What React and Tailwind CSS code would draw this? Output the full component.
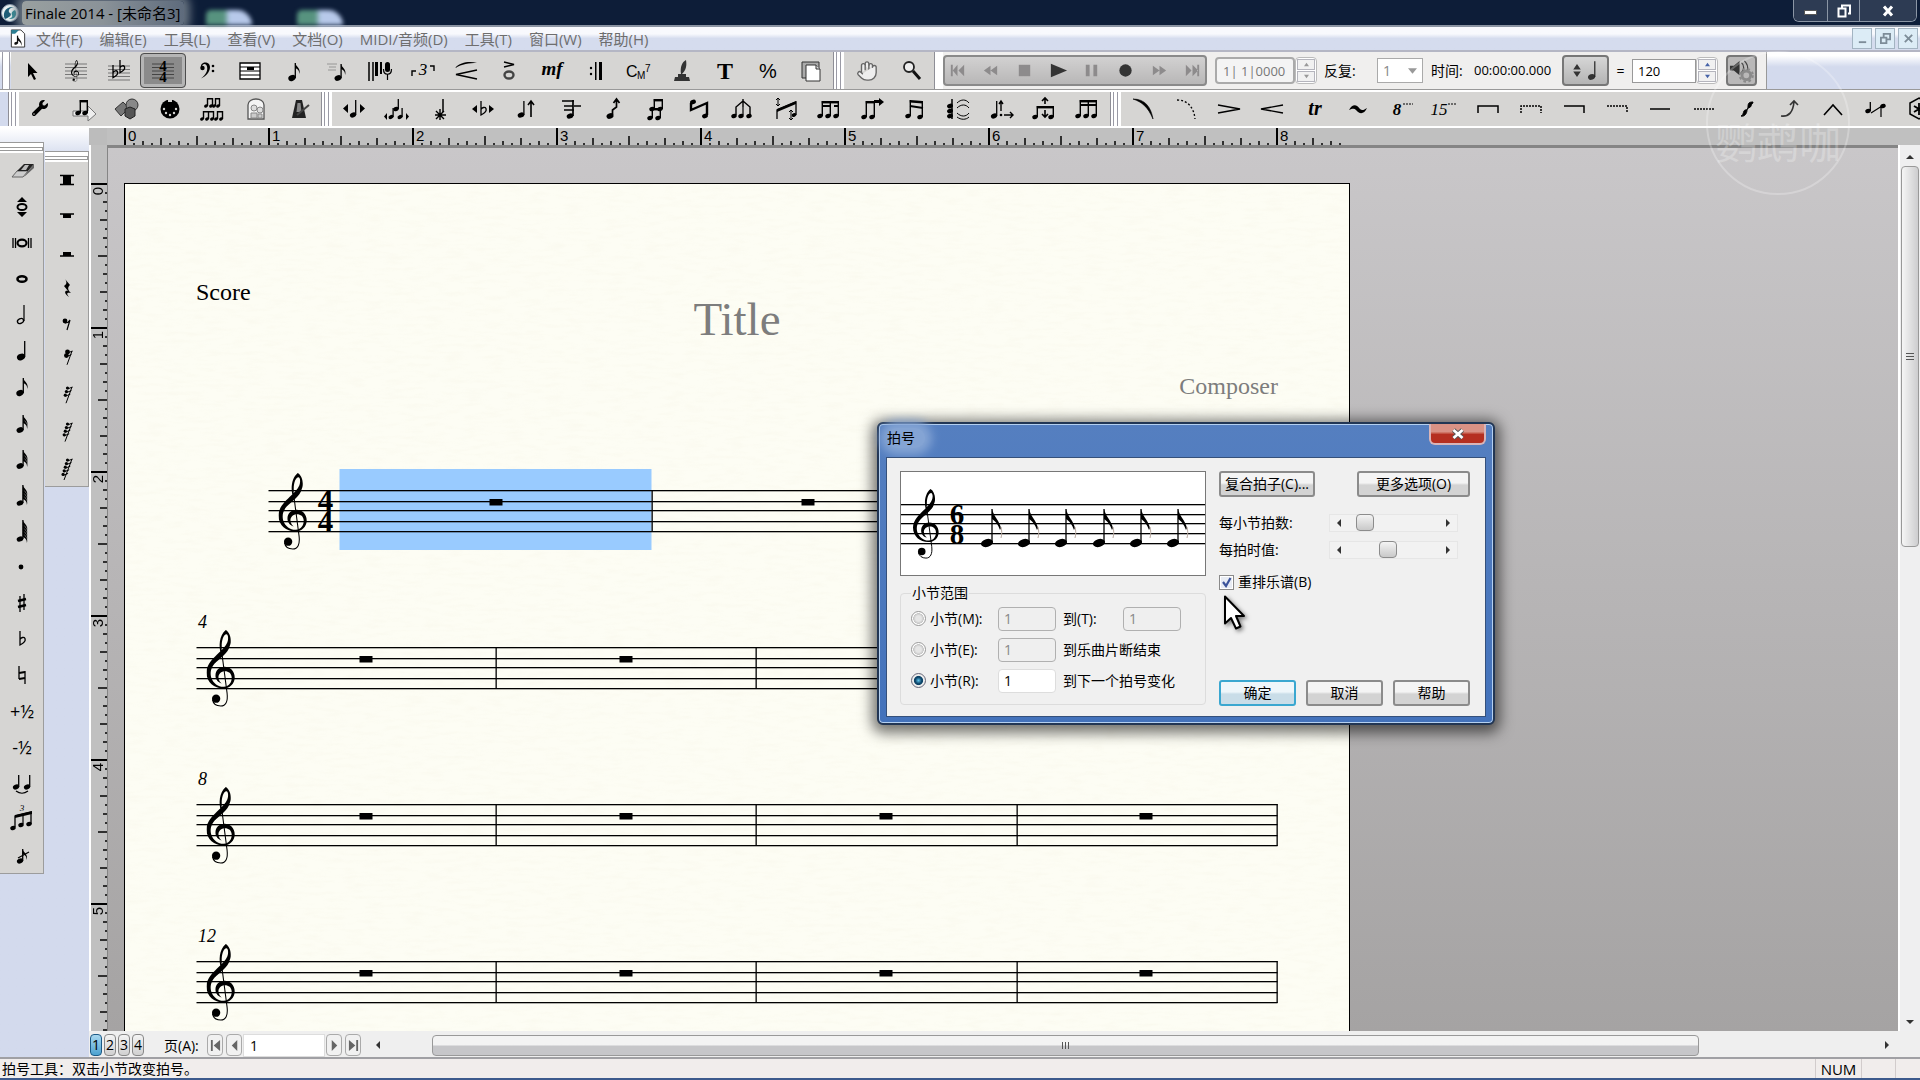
import React from "react";
import { FaWrench } from "react-icons/fa";
import { Hand } from "lucide-react";

/* ---------- music drawing helpers ---------- */

const Head = ({ x, y, r = 3 }) => (
  <ellipse cx={x} cy={y} rx={r} ry={r * 0.75} transform={`rotate(-22 ${x} ${y})`} />
);

const Note = ({ x, y, h = 12, r = 3, flags = 0 }) => (
  <g>
    <Head x={x} y={y} r={r} />
    <path d={`M${x + r - 0.5} ${y}v${-h}`} stroke="currentColor" strokeWidth="1.3" fill="none" />
    {Array.from({ length: flags }, (_, i) => (
      <path
        key={i}
        d={`M${x + r - 0.5} ${y - h + i * 3}c0 3 6 5 4 11c0-4-2-5-4-6z`}
      />
    ))}
  </g>
);

const ClefShape = () => (
  <g>
    <path d="M92 48C88 70 62 84 46 102C34 116 33 130 36 142C42 162 60 172 74 171C92 170 98 156 98 144C98 130 88 124 78 124C66 124 58 132 58 142C58 151 63 157 68 161C56 158 49 148 49 138C49 122 60 111 76 111C94 111 107 125 107 143C107 162 92 176 72 176C46 176 22 158 22 128C22 102 44 84 60 68C76 52 86 42 87 26C87.5 18 85 13 82 13C74 13 67 30 68 52L66 74C58 50 60 16 80 0C90 6 96 20 95 36C94.6 42 93.5 45 92 48Z" />
    <path d="M67 60L84 190C87 215 80 229 65 229C52 229 42 222 40 210" fill="none" stroke="currentColor" strokeWidth="3.2" />
    <circle cx="51" cy="207" r="12.5" />
  </g>
);

const Clef = ({ x, y, h = 77 }) => (
  <svg x={x} y={y} width={(h * 86) / 232} height={h} viewBox="22 0 86 232">
    <ClefShape />
  </svg>
);

const Staff = ({ x = 3, y = 7, w = 22, gap = 3.5, c = "#777" }) => (
  <path
    d={[0, 1, 2, 3, 4].map((i) => `M${x} ${y + i * gap}h${w}`).join("")}
    stroke={c}
    strokeWidth="1"
    fill="none"
  />
);

const Beam = ({ xs, y = 21, top = 6, r = 2.8, thick = 2.4, slope = 0 }) => (
  <g>
    {xs.map((x, i) => (
      <g key={x}>
        <Head x={x} y={y + (slope * i) / (xs.length - 1 || 1)} r={r} />
        <path d={`M${x + r - 0.5} ${y + (slope * i) / (xs.length - 1 || 1)}V${top + (slope * i) / (xs.length - 1 || 1)}`} stroke="currentColor" strokeWidth="1.4" />
      </g>
    ))}
    <path d={`M${xs[0] + r - 1} ${top}L${xs[xs.length - 1] + r} ${top + slope}v${thick}L${xs[0] + r - 1} ${top + thick}z`} />
  </g>
);

const L = ({ d, w = 1.2, c = "currentColor", dash }) => (
  <path d={d} fill="none" stroke={c} strokeWidth={w} strokeDasharray={dash} />
);

const Serif = ({ x = 14, y, s, children, italic, weight = 700 }) => (
  <text
    x={x}
    y={y}
    textAnchor="middle"
    className={italic ? "font-['Liberation_Serif',serif] italic" : "font-['Liberation_Serif',serif]"}
    fontSize={s}
    fontWeight={weight}
  >
    {children}
  </text>
);

const Flat = ({ x, y, s = 1 }) => (
  <path d={`M${x} ${y}v${14 * s}c${3 * s}${-1.5 * s} ${6 * s}${-4 * s} ${5 * s}${-6.5 * s}c${-1 * s}${-2 * s} ${-4 * s}${-1 * s} ${-5 * s} 1`} fill="none" stroke="currentColor" strokeWidth="1.3" />
);

/* ---------- toolbar icon sets: [label, drawing] ---------- */

const mainTools = [
  ["选择", <path d="M9 6v14l3-3 3 6 2-1-3-6h4.5z" />],
  ["谱表", <><Staff /><Clef x={9} y={3} h={22} /></>],
  ["调号", <><Staff y={9} /><Flat x={8} y={8} s={0.9} /><Flat x={15} y={3} s={0.9} /></>],
  ["拍号", <><Staff y={7} c="#444" /><Serif y={14} s={15}>4</Serif><Serif y={25} s={15}>4</Serif></>],
  ["谱号", <><path d="M8 12c-1-5 2-7 5-6.5c6 .5 6 11-5 16c5-4 7-8 6-12c-.6-3-4-3.5-5 0z" /><circle cx="9.5" cy="11" r="2.2" /><circle cx="20" cy="9" r="1.3" /><circle cx="20" cy="14" r="1.3" /></>],
  ["小节", <><path d="M4 6h20v16H4z" fill="#fff" stroke="currentColor" strokeWidth="1.3" /><L d="M4 10h20M4 14h20M4 18h20" /><path d="M11 10h7v3h-7z" /></>],
  ["简易输入", <Note x={12} y={21} h={15} r={3.8} flags={1} />],
  ["快速输入", <><Note x={15} y={21} h={14} r={3.6} flags={1} /><L d="M4 7h10M6 10h7M5 13h8" w={0.8} c="#888" /></>],
  ["HyperScribe", <><L d="M3 5v19M7 5v19" w={1.5} /><path d="M9 5h3v14H9zM14 5h2v12h-2z" /><rect x="19" y="5" width="5" height="10" rx="2.5" /><L d="M17.5 12c0 7 8 7 8 0M21.5 17v6" /></>],
  ["连音", <><L d="M3 19v-5h4M25 14v-5h-4" w={1.4} /><Serif y={18} s={17} italic weight={400}>3</Serif></>],
  ["智能图形", <><path d="M3 11c5-6 15-7 22-5c-8 0-15 1-22 5z" /><L d="M25 13L4 17.5l21 4.500" w={1.4} /></>],
  ["演奏法", <><L d="M9 5l10 2.500-10 2.500" w={1.3} /><ellipse cx="14" cy="18" rx="4.5" ry="3.5" fill="none" stroke="#444" strokeWidth="2.4" /></>],
  ["表情", <Serif y={18} s={19} italic>mf</Serif>],
  ["反复", <><circle cx="9" cy="11" r="1.2" /><circle cx="9" cy="17" r="1.2" /><path d="M13 5h1.5v18H13zM17 5h3v18h-3z" /></>],
  ["和弦", <><text x="1" y="20" fontSize="16" className="font-['Liberation_Sans',sans-serif]">C</text><text x="12" y="22" fontSize="10" className="font-['Liberation_Sans',sans-serif]">M</text><text x="20" y="15" fontSize="10" className="font-['Liberation_Sans',sans-serif]">7</text></>],
  ["歌词", <><path d="M13 17c-1-7 1-12 5-14c1 6 0 10-4 14zM10 17h8v3h-8zM7 20h14l1 4H6z" fill="#333" /></>],
  ["文本", <Serif y={22} s={24}>T</Serif>],
  ["缩放", <text x="14" y="21" textAnchor="middle" fontSize="20" className="font-['Liberation_Sans',sans-serif]">%</text>],
  ["页面布局", <><path d="M5 5h17v16H5z" fill="#aaa" stroke="#333" /><path d="M9 8h10l4 4v12H9z" fill="#fff" stroke="#333" /><path d="M19 8v4h4" fill="#ddd" stroke="#333" /></>],
];

const advancedTools = [
  ["特殊工具", <FaWrench x="5" y="5" width="18" height="18" />],
  ["音符镜像", <><path d="M3 16h15v-5l8 8-8 7v-5H3z" fill="#eee" stroke="#777" /><Beam xs={[8, 15]} y={18} top={5} /></>],
  ["图形", <><path d="M2 14l8-7 6 6-8 8z" fill="#777" stroke="#333" /><circle cx="19" cy="10" r="6" fill="#888" stroke="#333" /><path d="M12 14l5-2 5 2v7l-5 3-5-3z" fill="#555" stroke="#222" /></>],
  ["MIDI", <><circle cx="14" cy="14" r="9.5" /><path d="M12 3h4v4h-4z" fill="#d6d5d3" /><g fill="#d6d5d3"><circle cx="8" cy="14" r="1.2" /><circle cx="20" cy="14" r="1.2" /><circle cx="14" cy="20" r="1.2" /><circle cx="10" cy="18" r="1.2" /><circle cx="18" cy="18" r="1.2" /></g></>],
  ["Ossia", <><Beam xs={[7, 12]} y={11} top={3} r={2} thick={1.5} /><Beam xs={[15, 19]} y={11} top={3} r={2} thick={1.5} /><Beam xs={[3, 8, 13]} y={24} top={16} r={2} thick={1.5} /><Beam xs={[17, 22]} y={24} top={16} r={2} thick={1.5} /></>],
  ["镜像", <><path d="M6 24V10c0-8 16-8 16 0v14z" fill="#f4f4f4" stroke="#555" strokeWidth="1.3" /><circle cx="12" cy="13" r="3" fill="#ddd" stroke="#888" /><circle cx="18" cy="15" r="3" fill="#ddd" stroke="#888" /><path d="M9 18h6v5H9zM16 19h4v4h-4z" fill="#ccc" stroke="#888" /></>],
  ["节拍", <><path d="M11 5h6l4 18H7z" fill="#222" /><path d="M12.5 8h3l1 9h-5z" fill="#888" /><L d="M12 20L24 10" w={2} c="#444" /></>],
];

const noteTools = [
  ["音符移位", <><path d="M8 9v9l-5-4.5zM20 9v9l5-4.5z" /><Note x={13} y={20} h={15} r={3.2} /></>],
  ["音符位置", <><Note x={13} y={14} h={10} r={2.8} /><Note x={8} y={22} h={9} r={2.6} /><Note x={17} y={22} h={9} r={2.6} /><path d="M4 18v7l-3-3.5zM23 18v7l3-3.5z" /></>],
  ["符头", <><L d="M17 4v13" w={1.5} /><L d="M10 16l8 8M18 16l-8 8M14 14v11M9 20h11" w={1.4} /></>],
  ["临时记号", <><path d="M8 10v8l-5-4zM20 10v8l5-4z" /><Flat x={12} y={6} /></>],
  ["符干长度", <><Note x={9} y={20} h={14} r={3.4} /><L d="M19 22V6M16 10l3-4 3 4" w={1.6} /></>],
  ["反向符干", <><L d="M6 6h12M8 11h9M8 15h10M17 5v16M18 11h7" w={1.7} /><Head x={14} y={21} r={3.4} /></>],
  ["自定义符干", <><Head x={11} y={21} r={3.6} /><L d="M13.5 20v-5l4-3V5M14.5 8l3-4 3 4" w={1.7} /></>],
  ["符杠", <><Beam xs={[10, 18]} y={14} top={4} /><Beam xs={[8, 16]} y={23} top={13} /></>],
  ["符杠角度", <><L d="M6 8v7l16-7v12" w={2.4} /><Head x={8} y={7} /><Head x={20} y={21} /></>],
  ["符杠打断", <><L d="M14 4v8M14 6l-7 6v8M14 6l7 6v8" w={1.4} /><Head x={5} y={21} r={2.8} /><Head x={12} y={21} r={2.8} /><Head x={20} y={21} r={2.8} /><L d="M14 12v8" /></>],
  ["符杠延伸", <><L d="M5 24V15L24 7v13" w={1.3} /><path d="M5 14l19-8v3L5 17z" /><L d="M6 3v8M4 5l2-2 2 2M4 9l2 2 2-2M19 15v10M17 17l2-2 2 2M17 23l2 2 2-2" w={1} /><Head x={22} y={20} r={2.4} /></>],
  ["次级符杠", <><Beam xs={[5, 13, 21]} y={21} top={6} /><L d="M7 11h8M19 11h4" w={2} /></>],
  ["符杠箭头", <><Beam xs={[6, 14]} y={22} top={6} /><path d="M16 5h5V3l5 4-5 4V8h-5z" /></>],
  ["符杠厚度", <><Beam xs={[7, 19]} y={21} top={5} slope={1} /><L d="M9 11l13 2" w={1.8} /></>],
  ["连线", <><L d="M7 4v20" w={1.5} /><Head x={5} y={11} /><Head x={5} y={16} /><Head x={5} y={21} /><L d="M12 8c4-4 9-4 12 0M12 13c4-4 9-4 12 0M12 18c4 4 9 4 12 0M12 22c4 3 9 3 12 0" w={1} /></>],
  ["附点", <><Note x={6} y={21} h={15} r={3.2} /><circle cx="13" cy="20" r="1.3" /><L d="M13 16V7M11 9l2-3 2 3M16 20h9M22 17l3 3-3 3" w={1.4} /></>],
  ["符干端", <><Beam xs={[4, 20]} y={22} top={11} /><L d="M14 9V3M11 6l3-3 3 3M14 15v6M11 19l3 3 3-3" w={1.6} /></>],
  ["符杠样式", <><Beam xs={[4, 12, 20]} y={21} top={5} /><L d="M6 10h17" w={2} /></>],
];

const shapeTools = [
  ["连线", <path d="M4 4c12 0 18 8 20 20C19 12 13 7 4 4z" stroke="currentColor" strokeWidth=".6" />],
  ["虚连线", <L d="M5 5c11 0 17 8 18 19" dash="2 2" w={1.3} />],
  ["渐弱", <L d="M3 10l22 4-22 4" w={1.4} />],
  ["渐强", <L d="M25 10L3 14l22 4" w={1.4} />],
  ["颤音", <Serif y={20} s={20} italic>tr</Serif>],
  ["颤音线", <path d="M5 15c4-7 8-5 11-1c2 2 4 1 7-1c-3 7-8 6-11 2c-2-2-4-1-7 0z" />],
  ["高八度", <><Serif x={9} y={20} s={17} italic>8</Serif><L d="M15 9h10" dash="2 1" w={1} /></>],
  ["十五度", <><Serif x={8} y={20} s={17} italic weight={400}>15</Serif><L d="M17 9h9" dash="2 1" w={1} /></>],
  ["方括号", <L d="M4 18v-7h20v7" w={1.5} />],
  ["虚方括号", <L d="M4 18v-7h20v7" w={1.5} dash="2 1" />],
  ["半括号", <L d="M4 11h20v7" w={1.5} />],
  ["虚半括号", <L d="M4 11h20v7" w={1.5} dash="2 1" />],
  ["直线", <L d="M4 14h20" w={1.5} />],
  ["虚线", <L d="M4 14h20" w={1.5} dash="2 1" />],
  ["滑音", <path d="M8 21c2 0 2-3 3-5s4 0 4-4 1-5 5-5c0 2-2 2-2 4s-4 1-4 4-2 7-6 6z" stroke="currentColor" />],
  ["推弦", <L d="M5 21c8 1 12-4 13-14M14 10l4-4 4 4" w={1.6} c="#333" />],
  ["尖角", <L d="M5 20l9-10 9 10" w={1.6} />],
  ["滑线", <><Note x={6} y={16} h={9} r={2.8} /><L d="M9 18l11-7M19 11v11" /><Head x={21} y={11} r={2.8} /></>],
  ["自定义线", <><L d="M14 3l9 5v11l-9 5-9-5V8z" w={1.5} /><L d="M14 8v12M9 11l10 6M19 11l-10 6" w={1.8} /></>],
];

const flaggedRest = (n) => (
  <g>
    {Array.from({ length: n }, (_, i) => (
      <g key={i}>
        <circle cx={14.5 - i * 1.1} cy={6 + i * 3.6} r={n < 3 ? 2.4 : 1.6} />
        <L d={`M${14.5 - i * 1.1} ${7 + i * 3.6}l5-2`} w={1} />
      </g>
    ))}
    <L d={`M19 5l-${3 + n} ${9 + n * 2.4}`} w={1} />
  </g>
);

const noteDurations = [
  ["橡皮擦", <><path d="M4 20l5-6h11l-5 6z" fill="#ccc" stroke="#666" /><path d="M9 14l7-7h10l-6 7z" fill="#222" /><path d="M20 14l6-7v4l-10 9z" fill="#666" /><path d="M13 13l4-5h4l-3 5z" fill="#bbb" /></>],
  ["重定音高", <><path d="M9 9l5-5 5 5zM9 19l5 5 5-5z" /><ellipse cx="14" cy="14" rx="4.5" ry="3" fill="none" stroke="currentColor" strokeWidth="2" /></>],
  ["倍全音符", <><L d="M5 9v10M7.5 9v10M20.5 9v10M23 9v10" w={1.3} /><ellipse cx="14" cy="14" rx="4.5" ry="3.3" fill="none" stroke="currentColor" strokeWidth="2.2" /></>],
  ["全音符", <ellipse cx="14" cy="14" rx="4.5" ry="2.8" fill="none" stroke="currentColor" strokeWidth="2.6" />],
  ["二分音符", <><ellipse cx="12.5" cy="20" rx="3.2" ry="2.3" fill="none" stroke="currentColor" strokeWidth="1.3" transform="rotate(-25 12.5 20)" /><L d="M16 20V4" /></>],
  ["四分音符", <Note x={13} y={20} h={16} r={4.2} />],
  ["八分音符", <Note x={12} y={20} h={15} r={3.8} flags={1} />],
  ["十六分音符", <Note x={12} y={21} h={15} r={3.6} flags={2} />],
  ["三十二分音符", <Note x={12} y={21} h={16} r={3.6} flags={3} />],
  ["六十四分音符", <Note x={12} y={22} h={18} r={3.4} flags={4} />],
  ["一百二十八分音符", <Note x={12} y={22} h={19} r={3.4} flags={5} />],
  ["附点", <circle cx="13" cy="14" r="2.4" />],
  ["升号", <><L d="M12 7v16M16 5v16" w={1.3} /><L d="M10 12l8-2M10 18l8-2" w={2.4} /></>],
  ["降号", <Flat x={12} y={6} />],
  ["还原号", <><L d="M11 5v13M17 10v13" w={1.3} /><L d="M11 12l6-1M11 18l6-1" w={2.2} /></>],
  ["升半音", <text x="14" y="21" textAnchor="middle" fontSize="18" className="font-['Open_Sans',sans-serif]">+½</text>],
  ["降半音", <text x="14" y="21" textAnchor="middle" fontSize="18" className="font-['Open_Sans',sans-serif]">-½</text>],
  ["延音线", <><Note x={8} y={18} h={12} r={3.2} /><Note x={19} y={18} h={12} r={3.2} /><L d="M8 22c4 3 8 3 12 0" /></>],
  ["三连音", <><L d="M7 22V11l16-4v12" w={1.3} /><path d="M7 10l17-4v3L7 13z" /><Head x={5} y={23} r={2.8} /><Head x={13} y={20} r={2.8} /><Head x={21} y={19} r={2.8} /><L d="M15 19V9" /><Serif y={6} s={9} italic weight={400}>3</Serif></>],
  ["倚音", <><Note x={12} y={20} h={12} r={3.2} flags={1} /><L d="M10 17l11-6" /></>],
];

const rests = [
  ["倍全休止", <><L d="M7 9.5h14M7 18.500h14" w={1.4} /><path d="M10 10h8v8h-8z" /></>],
  ["全休止", <><L d="M7 12h14" w={1.5} /><path d="M10 12h8v4h-8z" /></>],
  ["二分休止", <><L d="M7 18h14" w={1.5} /><path d="M10 14h8v4h-8z" /></>],
  ["四分休止", <path d="M12 5l5 6c-3 3-2 5 1 8c-4-1-5 0-2 4c-6-4-4-7-1-6l-4-5c3-2 3-4 1-7z" />],
  ["八分休止", <><circle cx="12" cy="11" r="2.4" /><L d="M12 13c3 0 4-1 5-3l-3 10" w={1.2} /></>],
  ["十六分休止", flaggedRest(2)],
  ["三十二分休止", flaggedRest(3)],
  ["六十四分休止", flaggedRest(4)],
  ["一百二十八分休止", flaggedRest(5)],
];

const Glyph = ({ children }) => (
  <svg viewBox="0 0 28 28" className="size-7 shrink-0 overflow-visible" fill="currentColor" aria-hidden="true">
    {children}
  </svg>
);

const ToolGroup = ({ items, width, selected }) => (
  <div className={`flex h-full shrink-0 bg-[#d6d5d3] ${width}`}>
    {items.map(([label, art], i) => (
      <button
        key={i}
        type="button"
        aria-label={label}
        className={
          i === selected
            ? "my-[1px] flex min-w-0 flex-1 items-center justify-center rounded border border-[#4d4d4d] bg-[#8b8b8b] shadow-[inset_0_0_0_3px_#b5b5b5]"
            : "flex min-w-0 flex-1 items-center justify-center"
        }
      >
        <Glyph>{art}</Glyph>
      </button>
    ))}
  </div>
);

const Grip = () => (
  <div className="flex h-full w-[11px] shrink-0 border-l border-[#8e8e96] bg-white">
    <div className="ml-[2px] w-[5px] border-x border-[#9a9aa5]" />
  </div>
);

/* ---------- top chrome ---------- */

const TitleBar = () => (
  <header className="flex h-[25px] shrink-0 items-center justify-between bg-[#0d1d38] pl-[1px]">
    <div className="flex h-full items-center">
      <svg viewBox="0 0 18 18" className="size-[18px]" aria-hidden="true">
        <circle cx="9" cy="9" r="8.5" fill="#e9f1f2" stroke="#89a" />
        <path d="M13 3C7 4 7 8 9 9s1 4-5 6c-3-5 0-13 9-12z" fill="#1d5d77" />
        <path d="M14 6c-3 1-4 3-3 5s-1 3-3 4c6 1 9-5 6-9z" fill="#2b8a94" />
      </svg>
      <h1 className="ml-[3px] rounded bg-gradient-to-r from-[#99a0a0] via-[#8a9298] to-[#5e6b7c] px-[3px] text-[15px] leading-[24px] text-black shadow-[0_0_8px_6px_#66727f]">
        Finale 2014 - [未命名3]
      </h1>
      <div className="ml-[22px] flex h-full items-end gap-[45px] self-end">
        <div className="h-[15px] w-[46px] rounded-tl-lg rounded-tr-3xl bg-gradient-to-r from-[#57937f] from-40% to-[#b7c9ea] to-50% blur-[2px]" />
        <div className="h-[15px] w-[46px] rounded-tl-lg rounded-tr-3xl bg-gradient-to-r from-[#57937f] from-40% to-[#b7c9ea] to-50% blur-[2px]" />
      </div>
    </div>
    <div className="mr-[3px] flex h-[22px] self-start overflow-hidden rounded-b-md border border-t-0 border-[#8b96a5] text-white">
      <button type="button" aria-label="最小化" className="flex w-[34px] items-center justify-center border-r border-[#8b96a5] bg-[#2d3b53]">
        <span className="mt-[4px] h-[5px] w-[13px] border border-[#555] bg-white" />
      </button>
      <button type="button" aria-label="还原" className="flex w-[32px] items-center justify-center border-r border-[#8b96a5] bg-[#2d3b53]">
        <svg viewBox="0 0 14 14" className="size-[14px]" fill="none" stroke="#fff" strokeWidth="2" aria-hidden="true">
          <path d="M5 4V1.500h8v8h-2M1.500 4.500h7v8h-7z" />
        </svg>
      </button>
      <button type="button" aria-label="关闭" className="flex w-[56px] items-center justify-center bg-[#2d3b53]">
        <svg viewBox="0 0 12 12" className="size-[12px]" stroke="#fff" strokeWidth="3" aria-hidden="true">
          <path d="M2 1.500l8 9M10 1.500l-8 9" />
        </svg>
      </button>
    </div>
  </header>
);

const menus = ["文件(F)", "编辑(E)", "工具(L)", "查看(V)", "文档(O)", "MIDI/音频(D)", "工具(T)", "窗口(W)", "帮助(H)"];

const MenuBar = () => (
  <nav className="flex h-[27px] shrink-0 items-center justify-between border-t-2 border-b-2 border-t-[#8a93a2] border-b-[#b4b6c4] bg-gradient-to-b from-[#f8f9fd] from-30% to-[#d5dcee] to-50% pl-[10px]">
    <div className="flex items-center gap-[17px] text-[15px] leading-[20px] text-[#6e6e6e]">
      <svg viewBox="0 0 16 20" className="-mr-[7px] h-[19px] w-[16px]" aria-hidden="true">
        <path d="M1 1h10l4 4v14H1z" fill="#fff" stroke="#333" />
        <path d="M1 1h8l-4 4H1z" fill="#2b7f93" />
        <g fill="#111" color="#111"><Note x={6} y={15} h={8} r={2} flags={1} /></g>
      </svg>
      {menus.map((m) => (
        <button key={m} type="button" className="whitespace-nowrap">{m}</button>
      ))}
    </div>
    <div className="mr-[2px] flex gap-[3px]">
      {[
        ["最小化子窗口", "M2 10h8"],
        ["还原子窗口", "M4 4V1h7v6H8M1 5h6v6H1z"],
        ["关闭子窗口", "M2 2l8 8M10 2l-8 8"],
      ].map(([label, d]) => (
        <button key={label} type="button" aria-label={label} className="flex h-[21px] w-[20px] items-center justify-center border border-[#a3b4c2] bg-[#dcecf6]">
          <svg viewBox="0 0 12 12" className="size-[11px]" fill="none" stroke="#7d8c98" strokeWidth="2" aria-hidden="true"><path d={d} /></svg>
        </button>
      ))}
    </div>
  </nav>
);

const Spinner = ({ muted }) => (
  <div className="flex h-[27px] w-[22px] shrink-0 flex-col gap-[1px] rounded-sm border border-[#bbb] bg-white p-[1px]">
    {["M1 5l3-4 3 4z", "M1 1l3 4 3-4z"].map((d, i) => (
      <button key={i} type="button" aria-label={i ? "减小" : "增大"} className="flex flex-1 items-center justify-center border border-[#b5b5bd] bg-[#f1f1f1]">
        <svg viewBox="0 0 8 6" className="h-[5px] w-[7px]" fill={muted ? "#999" : "#4663a8"} aria-hidden="true"><path d={d} /></svg>
      </button>
    ))}
  </div>
);

const transport = [
  ["到开头", "#8d8b8c", "M3 4h2v12H3zM10 4v12l-5-6zM17 4v12l-6-6z"],
  ["后退", "#8d8b8c", "M10 5v10l-7-5zM17 5v10l-7-5z"],
  ["停止", "#8d8b8c", "M4 4h12v12H4z"],
  ["播放", "#343434", "M2 3l17 7-17 7z"],
  ["暂停", "#8d8b8c", "M4 4h4v12H4zM12 4h4v12h-4z"],
  ["录音", "#343434", "M10 3.500a6.500 6.500 0 1 1 0 13a6.500 6.500 0 1 1 0-13z"],
  ["前进", "#8d8b8c", "M3 5v10l7-5zM10 5v10l7-5z"],
  ["到结尾", "#8d8b8c", "M3 4v12l6-6zM10 4v12l6-6zM15 4h2v12h-2z"],
];

const Playback = () => (
  <div className="flex h-full shrink-0 items-center border-r border-[#999] bg-[#f0efee] pr-[9px] text-[14px]">
    <div className="flex h-[31px] w-[264px] items-center justify-between rounded-sm border-2 border-[#8a8a8a] bg-gradient-to-b from-[#d2d1d1] to-[#b8b7b7] px-[2px]">
      {transport.map(([label, fill, d]) => (
        <button key={label} type="button" aria-label={label} className="flex size-[20px] items-center justify-center">
          <svg viewBox="0 0 20 20" className="size-[19px]" fill={fill} aria-hidden="true"><path d={d} /></svg>
        </button>
      ))}
    </div>
    <input aria-label="位置" disabled defaultValue="1| 1|0000" className="ml-[8px] h-[27px] w-[80px] rounded-sm border-2 border-[#aaa] bg-[#f4f4f4] px-[6px] text-[13px] text-[#777]" />
    <Spinner muted />
    <label htmlFor="repeat" className="ml-[7px] w-[53px]">反复:</label>
    <div className="grid h-[25px] w-[46px] items-center border border-[#aaa] bg-white">
      <select id="repeat" disabled className="h-full w-full appearance-none bg-white px-[5px] text-[14px] leading-none text-[#888] [grid-area:1/1]">
        <option>1</option>
      </select>
      <svg viewBox="0 0 10 6" className="mr-[5px] h-[6px] w-[9px] justify-self-end [grid-area:1/1]" fill="#999" aria-hidden="true"><path d="M0 0h10L5 6z" /></svg>
    </div>
    <span className="ml-[8px] w-[43px]">时间:</span>
    <span className="w-[88px] text-[13px]">00:00:00.000</span>
    <button type="button" aria-label="拍值" className="flex h-[31px] w-[47px] items-center justify-center gap-[6px] rounded-sm border-2 border-[#777] bg-gradient-to-b from-[#d6d6d6] to-[#b4b4b4] text-[#222]">
      <svg viewBox="0 0 8 16" className="h-[15px] w-[8px]" fill="#333" aria-hidden="true"><path d="M0 7l4-6 4 6zM0 9l4 6 4-6z" /></svg>
      <svg viewBox="0 0 12 22" className="h-[21px] w-[11px]" fill="#333" aria-hidden="true"><Note x={5} y={18} h={17} r={4} /></svg>
    </button>
    <label htmlFor="tempo" className="w-[23px] text-center">=</label>
    <input id="tempo" defaultValue="120" className="h-[24px] w-[64px] border border-[#999] bg-white px-[5px] text-[13px]" />
    <Spinner />
    <button type="button" aria-label="播放设置" className="ml-[8px] flex h-[31px] w-[31px] items-center justify-center rounded-sm border-2 border-[#777] bg-[#b9b8b8]">
      <svg viewBox="0 0 26 26" className="size-[25px]" fill="#333" aria-hidden="true">
        <path d="M1 8h4l6-5v15l-6-5H1z" />
        <path d="M13 5c3 2 3 8 0 10M16 3c3 3 4 7 3 10" fill="none" stroke="#444" strokeWidth="1.3" />
        <circle cx="18" cy="18" r="4.5" fill="none" stroke="#8a8a8a" strokeWidth="3" />
        <circle cx="18" cy="18" r="6.8" fill="none" stroke="#8a8a8a" strokeWidth="2" strokeDasharray="2.7 2.7" />
      </svg>
    </button>
  </div>
);

/* ---------- rulers ---------- */

const tickLength = (i) => (i % 8 === 0 ? 9 : i % 4 === 0 ? 7 : i % 2 === 0 ? 4 : 2);

const TopRuler = () => (
  <div className="flex h-[17px] overflow-hidden bg-[#c0c0c0] pl-[17px]">
    {Array.from({ length: 9 }, (_, n) => (
      <div key={n} className="grid h-full w-36 shrink-0 border-l-2 border-black">
        <span className="ml-[2px] font-['Liberation_Sans',sans-serif] text-[15px] leading-[15px] [grid-area:1/1]">{n}</span>
        <svg viewBox="0 0 144 17" className="-ml-[2px] h-[17px] w-36 [grid-area:1/1]" aria-hidden="true">
          <path
            d={Array.from({ length: n === 8 ? 7 : 15 }, (_, i) => `M${(i + 1) * 9 + 1} 17v${-tickLength(i + 1)}`).join("")}
            stroke="#000"
            strokeWidth="1.5"
          />
        </svg>
      </div>
    ))}
  </div>
);

const SideRuler = () => (
  <div className="flex w-[18px] shrink-0 flex-col overflow-hidden border-l-2 border-white bg-[#c0c0c0] pt-[38px]">
    {Array.from({ length: 6 }, (_, n) => (
      <div key={n} className="grid h-36 w-[16px] shrink-0 border-t-2 border-black">
        <span className="mt-[2px] rotate-180 self-start text-right font-['Liberation_Sans',sans-serif] text-[15px] leading-[14px] [grid-area:1/1] [writing-mode:vertical-rl]">{n}</span>
        <svg viewBox="0 0 16 144" className="-mt-[2px] h-36 w-[16px] [grid-area:1/1]" aria-hidden="true">
          <path
            d={Array.from({ length: 15 }, (_, i) => `M16 ${(i + 1) * 9 + 1}h${-tickLength(i + 1)}`).join("")}
            stroke="#000"
            strokeWidth="1.5"
          />
        </svg>
      </div>
    ))}
  </div>
);

/* ---------- score ---------- */

const staffY = [0, 11, 20, 31, 41];

const System = ({ number, start = 0, bars, rests: restXs, first }) => (
  <div>
    <div className="ml-[2px] h-[14px] font-['Liberation_Serif',serif] text-[18px] leading-[14px] italic">{number}</div>
    <svg viewBox="0 -18 1081 80" className="block h-[80px] w-full overflow-visible" aria-hidden="true">
      {first && <rect x="143" y="-21" width="312" height="81" fill="#99cbff" />}
      {staffY.map((y) => (
        <rect key={y} x={start} y={y} width={1081 - start} height="1.3" />
      ))}
      {bars.map((x) => (
        <rect key={x} x={x} y="0" width="1.3" height="42" />
      ))}
      {restXs.map((x) => (
        <rect key={x} x={x - 6} y="9" width="13" height="6.5" />
      ))}
      <Clef x={start + 10} y={-17} />
      {first && (
        <g className="font-['Liberation_Serif',serif]" fontSize="31" fontWeight="700" textAnchor="middle">
          <text x="129" y="21">4</text>
          <text x="129" y="42">4</text>
        </g>
      )}
    </svg>
  </div>
);

const Page = () => (
  <article className="relative mt-[35px] ml-[16px] h-[1584px] w-[1226px] shrink-0 border border-black bg-[#fdfdf4] px-[71px]">
    <svg className="absolute inset-0 h-full w-full opacity-15" aria-hidden="true">
      <filter id="paper">
        <feTurbulence type="fractalNoise" baseFrequency="0.05 0.25" numOctaves="3" seed="4" />
        <feColorMatrix values="0 0 0 0 .8  0 0 0 0 .76  0 0 0 0 .6  0 0 0 1.6 -.7" />
      </filter>
      <rect width="100%" height="100%" filter="url(#paper)" />
    </svg>
    <div className="relative">
      <div className="grid grid-cols-3 pt-[94px] font-['Liberation_Serif',serif]">
        <p className="text-[24px] leading-[28px]">Score</p>
        <h2 className="pt-[14px] text-center text-[47px] leading-[54px] text-[#7d7d7d]">Title</h2>
        <p className="col-start-3 row-start-2 pt-[26px] text-right text-[24px] leading-[28px] text-[#7d7d7d]">Composer</p>
      </div>
      <div className="mt-[58px] flex flex-col gap-[63px]">
        <System first start={72} number="" bars={[455, 767, 1080]} rests={[299, 611, 923]} />
        <System number="4" bars={[299, 559, 820, 1080]} rests={[169, 429, 689, 949]} />
        <System number="8" bars={[299, 559, 820, 1080]} rests={[169, 429, 689, 949]} />
        <System number="12" bars={[299, 559, 820, 1080]} rests={[169, 429, 689, 949]} />
      </div>
    </div>
  </article>
);

/* ---------- palettes ---------- */

const Palette = ({ items, className }) => (
  <div className={`flex flex-col border-r border-b border-[#9c9c9c] bg-[#d6d5d3] ${className}`}>
    <div className="h-[11px] border-t border-[#999] bg-white pt-[4px]">
      <div className="h-[4px] border-y border-r border-[#999]" />
    </div>
    {items.map(([label, art]) => (
      <button key={label} type="button" aria-label={label} className="flex h-9 items-center justify-center">
        <Glyph>{art}</Glyph>
      </button>
    ))}
  </div>
);

/* ---------- scroll bars ---------- */

const Arrow = ({ d, label, className = "" }) => (
  <button type="button" aria-label={label} className={`flex size-[18px] shrink-0 items-center justify-center ${className}`}>
    <svg viewBox="0 0 10 10" className="size-[10px]" fill="#333" aria-hidden="true"><path d={d} /></svg>
  </button>
);

const VerticalScroll = () => (
  <div className="flex w-[22px] shrink-0 flex-col items-center border-l-2 border-white bg-[#efeff0] pt-[3px]">
    <Arrow label="向上" d="M1 7l4-4 4 4z" />
    <div className="flex w-full flex-1 flex-col items-center">
      <div className="flex h-[45%] w-[18px] flex-col items-center justify-center gap-[2px] rounded-sm border border-[#999] bg-gradient-to-r from-[#f6f6f6] to-[#cdcdcf]">
        <i className="h-px w-[8px] bg-[#555]" />
        <i className="h-px w-[8px] bg-[#555]" />
        <i className="h-px w-[8px] bg-[#555]" />
      </div>
    </div>
    <Arrow label="向下" d="M1 3l4 4 4-4z" />
  </div>
);

const pageButton = "flex h-[22px] w-[16px] items-center justify-center rounded-sm border border-[#aaa] bg-[#f1f1f1]";

const BottomBar = () => (
  <div className="flex h-[26px] shrink-0 items-center bg-[#efefef] pt-[2px] pl-px text-[14px]">
    <div className="flex gap-[2px]">
      {[1, 2, 3, 4].map((n) => (
        <button
          key={n}
          type="button"
          className={
            n === 1
              ? "h-[22px] w-[12px] rounded-sm border border-[#1c5a86] bg-gradient-to-b from-[#a8d8f0] to-[#4ba2d0] leading-none"
              : "h-[22px] w-[12px] rounded-sm border border-[#888] bg-gradient-to-b from-[#f4f4f4] to-[#d0d0d0] leading-none"
          }
        >
          {n}
        </button>
      ))}
    </div>
    <label htmlFor="page" className="ml-[20px] w-[43px]">页(A):</label>
    <div className="flex gap-[3px]">
      {[["首页", "M1 1h2v12H1zM11 1v12L4 7z"], ["上一页", "M9 1v12L3 7z"]].map(([label, d]) => (
        <button key={label} type="button" aria-label={label} className={pageButton}>
          <svg viewBox="0 0 12 14" className="h-[13px] w-[11px]" fill="#666" aria-hidden="true"><path d={d} /></svg>
        </button>
      ))}
    </div>
    <input id="page" defaultValue="1" className="mx-[1px] h-[23px] w-[82px] border border-[#ddd] bg-white px-[6px] text-[14px]" />
    <div className="flex gap-[3px]">
      {[["下一页", "M3 1v12l6-6z"], ["末页", "M9 1h2v12H9zM1 1v12l7-6z"]].map(([label, d]) => (
        <button key={label} type="button" aria-label={label} className={pageButton}>
          <svg viewBox="0 0 12 14" className="h-[13px] w-[11px]" fill="#666" aria-hidden="true"><path d={d} /></svg>
        </button>
      ))}
    </div>
    <div className="ml-[8px] flex flex-1 items-center">
      <Arrow label="向左" d="M7 1L3 5l4 4z" />
      <div className="flex flex-1">
        <div className="ml-[3%] flex h-[21px] w-[85%] items-center justify-center gap-[2px] rounded-sm border border-[#999] bg-gradient-to-b from-[#f3f3f3] from-45% to-[#c6c6c9] to-55%">
          <i className="h-[7px] w-px bg-[#555]" />
          <i className="h-[7px] w-px bg-[#555]" />
          <i className="h-[7px] w-px bg-[#555]" />
        </div>
      </div>
      <Arrow label="向右" d="M3 1l4 4-4 4z" />
    </div>
    <div className="w-[24px]" />
  </div>
);

/* ---------- dialog ---------- */

const fieldClass = "h-[24px] w-[58px] rounded-sm border px-[5px] text-[14px]";
const buttonClass =
  "h-[26px] rounded-[3px] border-2 border-[#8b8b8b] bg-gradient-to-b from-[#f4f4f4] from-45% to-[#d3d3d3] to-55% text-[14px] leading-none whitespace-nowrap";

const RangeRow = ({ id, label, children, value, checked }) => (
  <div className="flex h-[31px] items-center">
    <input
      type="radio"
      name="range"
      id={id}
      defaultChecked={checked}
      className="size-[15px] appearance-none rounded-full border border-[#999] bg-[radial-gradient(circle,#e6e6e6_30%,#c6c6c6_55%,#fff_60%)] checked:border-[#667] checked:bg-[radial-gradient(circle,#5cc4ec_0,#0e4468_35%,#0e4468_45%,#eee_55%)]"
    />
    <label htmlFor={id} className="ml-[4px] w-[68px]">{label}</label>
    <input
      aria-label={`${label} 起始小节`}
      disabled={!checked}
      defaultValue={value}
      className={checked ? `${fieldClass} border-[#ddd] bg-white` : `${fieldClass} border-[#b0b0b0] bg-[#efefef] text-[#888]`}
    />
    <div className="ml-[7px] flex flex-1 items-center">{children}</div>
  </div>
);

const BeatSlider = ({ id, label, value }) => (
  <div className="flex h-[27px] items-center">
    <label htmlFor={id} className="w-[110px]">{label}</label>
    <div className="flex h-[18px] w-[129px] items-center border border-[#e6e6e6] bg-[#f2f2f2]">
      <Arrow label="减少" d="M7 1L3 5l4 4z" />
      <input
        id={id}
        type="range"
        defaultValue={value}
        className="h-[18px] min-w-0 flex-1 appearance-none bg-transparent [&::-webkit-slider-thumb]:h-[17px] [&::-webkit-slider-thumb]:w-[18px] [&::-webkit-slider-thumb]:appearance-none [&::-webkit-slider-thumb]:rounded-sm [&::-webkit-slider-thumb]:border [&::-webkit-slider-thumb]:border-[#8c8c8c] [&::-webkit-slider-thumb]:bg-linear-to-b [&::-webkit-slider-thumb]:from-[#f4f4f4] [&::-webkit-slider-thumb]:to-[#c9c9c9]"
      />
      <Arrow label="增加" d="M3 1l4 4-4 4z" />
    </div>
  </div>
);

const Preview = () => (
  <svg viewBox="0 0 304 103" className="block h-[105px] w-[306px] border border-[#777] bg-white" aria-label="6/8 拍预览">
    {[32, 42, 51, 61, 71].map((y) => (
      <rect key={y} x="0" y={y} width="304" height="1.3" />
    ))}
    <Clef x={12} y={17} h={70} />
    <g className="font-['Liberation_Serif',serif]" fontSize="29" fontWeight="700" textAnchor="middle">
      <text x="56" y="52">6</text>
      <text x="56" y="72">8</text>
    </g>
    {[86, 123, 160, 198, 235, 272].map((x) => (
      <g key={x}>
        <ellipse cx={x} cy="71" rx="6.2" ry="4" transform={`rotate(-15 ${x} 71)`} />
        <path d={`M${x + 5} 70V37`} stroke="#000" strokeWidth="1.3" />
        <path d={`M${x + 5} 37c2 8 7 11 9 19l-1 2c-2-6-5-9-8-11z`} />
        <path d={`M${x + 14} 55c1 4 1 7 0 11`} fill="none" stroke="#b8a9a0" />
      </g>
    ))}
  </svg>
);

const TimeSignatureDialog = () => (
  <section
    role="dialog"
    aria-labelledby="dialog-title"
    className="absolute top-[422px] left-[877px] flex w-[618px] flex-col rounded-md border-2 border-[#223654] bg-[#507dc0] bg-gradient-to-b from-[#557fc0] to-[#4372bb] px-[7px] pb-[6px] text-[14px] leading-[20px] shadow-[0_3px_14px_5px_rgba(0,0,0,0.55),inset_0_0_0_1px_#b5d0f0]"
  >
    <div className="flex h-[33px] items-start justify-between">
      <h2 id="dialog-title" className="mt-[4px] ml-px rounded-full bg-[#84a4d4] pr-[10px] shadow-[0_0_10px_7px_#84a4d4]">拍号</h2>
      <button type="button" aria-label="关闭对话框" className="flex h-[21px] w-[57px] items-center justify-center rounded-b-md border-2 border-t-0 border-[#d9b5b8] bg-gradient-to-b from-[#d99285] from-40% to-[#b52f20] to-55%">
        <svg viewBox="0 0 14 12" className="h-[12px] w-[14px]" aria-hidden="true">
          <path d="M2.500 2l9 8M11.500 2l-9 8" stroke="#555" strokeWidth="4.5" />
          <path d="M2.500 2l9 8M11.500 2l-9 8" stroke="#fff" strokeWidth="2.8" />
        </svg>
      </button>
    </div>
    <form className="flex h-[260px] border border-[#35507a] bg-[#f0f0f0] pt-[13px] pr-[15px] pl-[13px]" onSubmit={(e) => e.preventDefault()}>
      <div className="w-[306px]">
        <Preview />
        <fieldset className="mt-[7px] h-[122px] rounded border border-[#dcdcdc] px-[10px]">
          <legend className="px-[1px]">小节范围</legend>
          <div>
            <RangeRow id="m" label="小节(M):" value="1">
              <label htmlFor="to" className="w-[60px]">到(T):</label>
              <input id="to" disabled defaultValue="1" className={`${fieldClass} border-[#b0b0b0] bg-[#efefef] text-[#888]`} />
            </RangeRow>
            <RangeRow id="e" label="小节(E):" value="1">到乐曲片断结束</RangeRow>
            <RangeRow id="r" label="小节(R):" value="1" checked>到下一个拍号变化</RangeRow>
          </div>
        </fieldset>
      </div>
      <div className="ml-[13px] flex flex-1 flex-col pb-[10px]">
        <div className="mb-[12px] flex justify-between">
          <button type="button" className={`w-[96px] ${buttonClass}`}>复合拍子(C)...</button>
          <button type="button" className={`w-[113px] ${buttonClass}`}>更多选项(O)</button>
        </div>
        <BeatSlider id="beats" label="每小节拍数:" value={11} />
        <BeatSlider id="value" label="每拍时值:" value={43} />
        <div className="mt-[9px] flex items-center gap-[4px]">
          <span className="grid size-[15px]">
            <input type="checkbox" id="rebar" defaultChecked className="size-[15px] appearance-none border border-[#8a8a8a] bg-[#e8ecf4] shadow-[inset_0_0_0_1px_#fff] [grid-area:1/1]" />
            <svg viewBox="0 0 15 15" className="pointer-events-none size-[15px] [grid-area:1/1]" aria-hidden="true">
              <path d="M4 7l3 4 4.500-8" fill="none" stroke="#3c549b" strokeWidth="2.2" />
            </svg>
          </span>
          <label htmlFor="rebar">重排乐谱(B)</label>
        </div>
        <div className="mt-auto flex justify-between">
          <button type="submit" className="h-[26px] w-[77px] rounded-[3px] border-2 border-[#3aa7d0] bg-gradient-to-b from-[#eef6fa] from-45% to-[#c9dde8] to-55% leading-none">确定</button>
          <button type="button" className={`w-[77px] ${buttonClass}`}>取消</button>
          <button type="button" className={`w-[77px] ${buttonClass}`}>帮助</button>
        </div>
      </div>
    </form>
    <svg viewBox="0 0 24 36" className="pointer-events-none absolute top-[171px] left-[344px] h-[36px] w-[24px] drop-shadow-[2px_2px_2px_rgba(0,0,0,0.5)]" aria-hidden="true">
      <path d="M2 1.500v27l6-5.500 5 10.500 4.500-2-4.500-10.500h8z" fill="#fff" stroke="#000" strokeWidth="2" strokeLinejoin="round" />
    </svg>
  </section>
);

/* ---------- application ---------- */

export default function App() {
  return (
    <div className="relative flex h-screen w-full flex-col overflow-hidden bg-[#d3daed] font-['Open_Sans','Noto_Sans_CJK_SC',sans-serif] text-black">
      <TitleBar />
      <MenuBar />
      <div className="flex h-[38px] shrink-0 overflow-hidden border-b border-[#999] bg-gradient-to-b from-white from-10% to-[#d3daed] to-40%">
        <div className="mr-px ml-[2px] w-[8px] shrink-0 border-x border-[#9a9aa5] bg-white" />
        <ToolGroup items={mainTools} width="w-[822px]" selected={3} />
        <Grip />
        <div className="flex h-full w-[90px] shrink-0 bg-[#d6d5d3]">
          <button type="button" aria-label="手形抓取" className="flex flex-1 items-center justify-center">
            <Hand className="size-[22px] fill-[#eee] text-[#666]" strokeWidth={1.5} />
          </button>
          <button type="button" aria-label="放大镜" className="flex flex-1 items-center justify-center">
            <Glyph>
              <circle cx="11" cy="10" r="5" fill="#eee" stroke="#222" strokeWidth="1.8" />
              <path d="M15 14l7 8" stroke="#111" strokeWidth="3" />
            </Glyph>
          </button>
        </div>
        <div className="w-[9px] shrink-0 border-l border-[#8e8e96] bg-white" />
        <Playback />
      </div>
      <div className="flex h-[38px] shrink-0 overflow-hidden border-t-2 border-b-2 border-white pl-[8px]">
        <Grip />
        <ToolGroup items={advancedTools} width="w-[302px]" />
        <Grip />
        <ToolGroup items={noteTools} width="w-[778px]" />
        <Grip />
        <ToolGroup items={shapeTools} width="w-[820px]" />
      </div>

      <main className="flex min-h-0 flex-1">
        <aside className="flex w-[89px] shrink-0 items-start bg-gradient-to-b from-white to-[#d3daed] to-[30px] pt-[14px]">
          <Palette items={noteDurations} className="w-[44px]" />
          <Palette items={rests} className="mt-[9px] ml-px w-[44px]" />
        </aside>
        <div className="flex min-w-0 flex-1 flex-col">
          <div className="flex shrink-0">
            <div className="w-[18px] shrink-0 bg-[#bcbcbc]" />
            <div className="min-w-0 flex-1"><TopRuler /></div>
          </div>
          <div className="flex min-h-0 flex-1">
            <SideRuler />
            <div className="flex min-w-0 flex-1 items-start overflow-hidden border-t-[3px] border-l border-[#858585] bg-gradient-to-b from-[#c9c7c9] to-[#a5a3a3]">
              <Page />
            </div>
            <VerticalScroll />
          </div>
          <BottomBar />
        </div>
      </main>

      <footer className="flex h-[23px] shrink-0 items-center justify-between border-t-2 border-b-[2px] border-t-[#a0a0a4] border-b-[#3d5a8c] bg-[#f1edec] pl-[2px] text-[14px] leading-[18px]">
        <p>拍号工具：双击小节改变拍号。</p>
        <div className="flex h-full items-center">
          <span className="flex h-full w-[47px] items-center justify-center border-x border-[#d2cccc] text-[15px]">NUM</span>
          <span className="mr-[24px] h-full w-[34px] border-r border-[#d2cccc]" />
        </div>
      </footer>

      <TimeSignatureDialog />

      <div className="pointer-events-none absolute top-[51px] right-[70px] flex size-[144px] items-end justify-center rounded-full border-2 border-white/25 pb-[25px] text-[42px] leading-[50px] text-white/25">
        鹦鹉咖
      </div>
    </div>
  );
}
